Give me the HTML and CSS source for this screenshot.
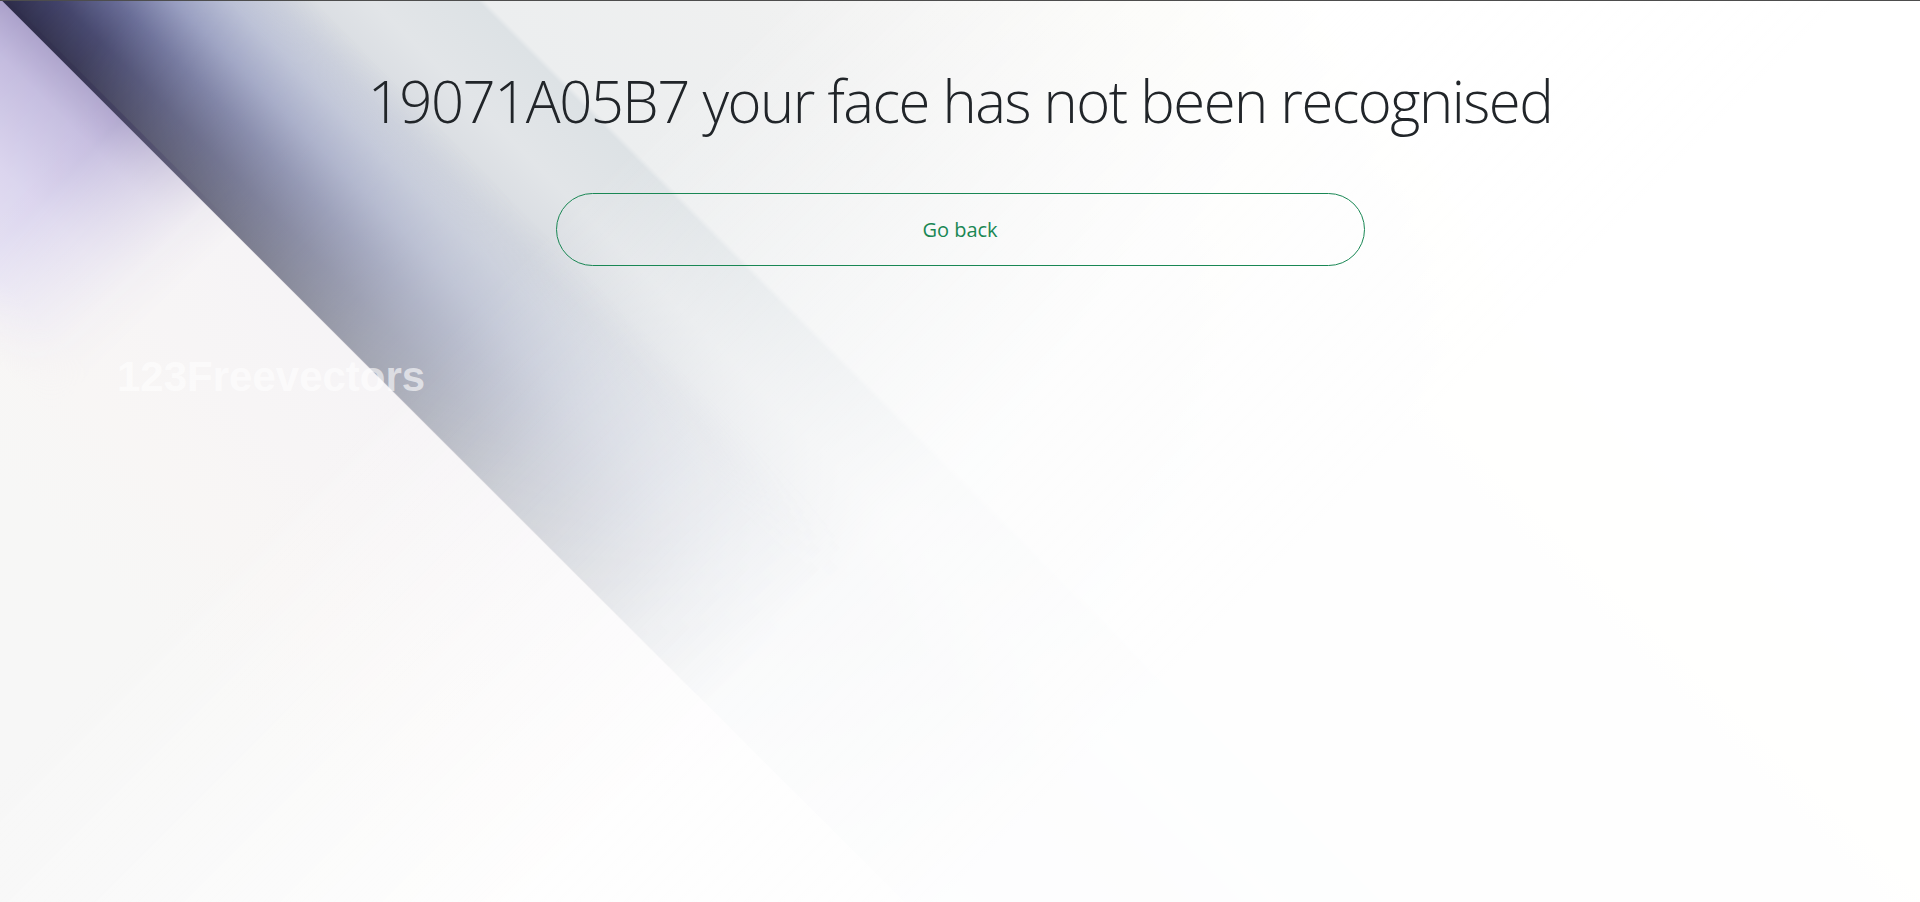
FILE: index.html
```html
<!DOCTYPE html>
<html lang="en">
<head>
    <meta charset="UTF-8">
    <meta name="viewport" content="width=device-width, initial-scale=1.0">
    <title>Face not recognised</title>
    <link rel="stylesheet" href="styles.css">
</head>
<body>
    <main class="page">
        <h1 class="title">19071A05B7 your face has not been recognised</h1>
        <a class="btn-back" href="#">Go back</a>
    </main>
    <span class="watermark">123Freevectors</span>
</body>
</html>
```

FILE: styles.css
```css
html {
    border-top: 1px solid #4d4d4d;
}

body {
    position: relative;
    margin: 0;
    min-height: 901px;
    overflow: hidden;
    font-family: "Open Sans", "Noto Sans", sans-serif;
    color: #212529;
    background:
        linear-gradient(135deg, rgba(255, 255, 255, 0) 0, rgba(255, 255, 255, 0) 550px, rgba(255, 255, 255, 0.5) 800px, rgba(255, 255, 255, 0.85) 1000px, rgba(255, 255, 255, 0.95) 1300px),
        linear-gradient(45deg, #f7f7f7 0, #f7f7f6 300px, #f8f6f5 420px, #f6f4f6 639px, #dfe4e8 640px, #d6dae0 830px, #e2e5e8 900px, #dde2e5 975px, #eceeef 980px, #eff0f0 1150px, #f4f4f3 1300px, #f9f9f4 1460px, #ffffff 1580px);
}

body::before,
body::after {
    content: "";
    position: absolute;
    top: 0;
    left: 0;
    width: 1920px;
    height: 902px;
    pointer-events: none;
}

/* lilac wedge, top left */
body::before {
    background: linear-gradient(45deg, rgba(228, 224, 243, 0) 380px, #e4e0f3 440px, #d8d2ed 520px, #c2bade 600px, #a89ec8 644px, rgba(168, 158, 200, 0) 645px);
    -webkit-mask-image: linear-gradient(135deg, #000 0, rgba(0, 0, 0, 0.9) 170px, rgba(0, 0, 0, 0.5) 230px, rgba(0, 0, 0, 0.1) 290px, transparent 330px);
    mask-image: linear-gradient(135deg, #000 0, rgba(0, 0, 0, 0.9) 170px, rgba(0, 0, 0, 0.5) 230px, rgba(0, 0, 0, 0.1) 290px, transparent 330px);
}

/* dark navy band */
body::after {
    background: linear-gradient(45deg, transparent 639px, #2c2b48 640px, #3d3e66 680px, #5f6390 720px, #8e94bb 760px, #b3b9d3 800px, rgba(216, 220, 226, 0) 860px);
    -webkit-mask-image: linear-gradient(135deg, #000 0, rgba(0, 0, 0, 0.92) 100px, rgba(0, 0, 0, 0.75) 200px, rgba(0, 0, 0, 0.55) 350px, rgba(0, 0, 0, 0.35) 500px, rgba(0, 0, 0, 0.15) 700px, rgba(0, 0, 0, 0.03) 900px, transparent 1000px);
    mask-image: linear-gradient(135deg, #000 0, rgba(0, 0, 0, 0.92) 100px, rgba(0, 0, 0, 0.75) 200px, rgba(0, 0, 0, 0.55) 350px, rgba(0, 0, 0, 0.35) 500px, rgba(0, 0, 0, 0.15) 700px, rgba(0, 0, 0, 0.03) 900px, transparent 1000px);
}

.page {
    position: relative;
    z-index: 2;
    display: flex;
    flex-direction: column;
    align-items: center;
    padding-top: 65px;
}

.title {
    margin: 0 0 57px;
    font-size: 58px;
    font-weight: 300;
    line-height: 1.2;
    letter-spacing: -1.5px;
    text-align: center;
}

.btn-back {
    display: flex;
    align-items: center;
    justify-content: center;
    box-sizing: border-box;
    width: 809px;
    height: 73px;
    border: 1px solid #198754;
    border-radius: 37px;
    color: #198754;
    font-size: 20px;
    text-decoration: none;
}

.btn-back:hover {
    background-color: #198754;
    color: #fff;
}

.watermark {
    position: absolute;
    z-index: 1;
    top: 355px;
    left: 117px;
    font-family: "Liberation Sans", Arial, sans-serif;
    font-size: 42px;
    font-weight: bold;
    line-height: 1;
    color: rgba(255, 255, 255, 0.6);
}
```
